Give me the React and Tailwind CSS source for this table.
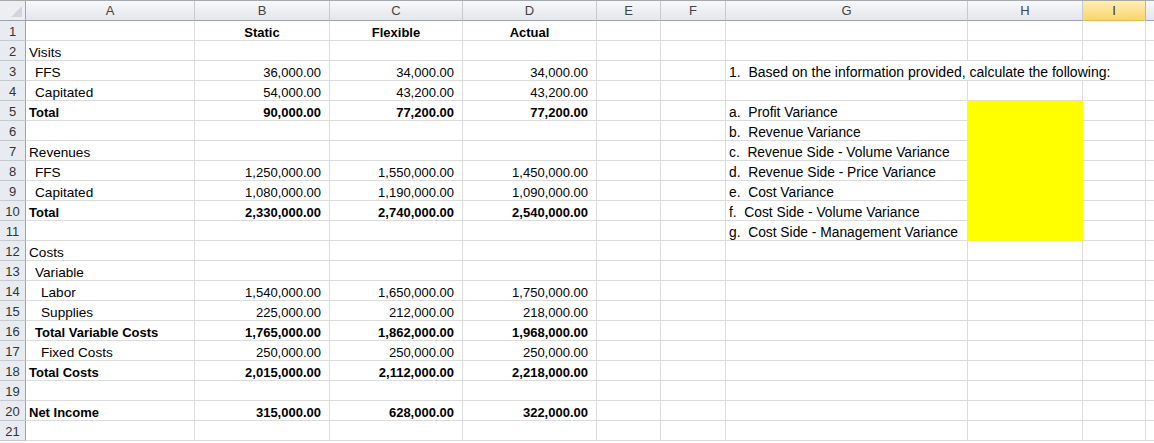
import React from "react";

const letters = ["A", "B", "C", "D", "E", "F", "G", "H", "I"];

const rows = [
  { hdr: true },
  { a: "Visits" },
  { a: "FFS", ind: 1, v: ["36,000.00", "34,000.00", "34,000.00"], g: "1.  Based on the information provided, calculate the following:", span: true },
  { a: "Capitated", ind: 1, v: ["54,000.00", "43,200.00", "43,200.00"] },
  { a: "Total", bold: true, v: ["90,000.00", "77,200.00", "77,200.00"], g: "a.  Profit Variance", y: true },
  { g: "b.  Revenue Variance", y: true },
  { a: "Revenues", g: "c.  Revenue Side - Volume Variance", y: true },
  { a: "FFS", ind: 1, v: ["1,250,000.00", "1,550,000.00", "1,450,000.00"], g: "d.  Revenue Side - Price Variance", y: true },
  { a: "Capitated", ind: 1, v: ["1,080,000.00", "1,190,000.00", "1,090,000.00"], g: "e.  Cost Variance", y: true },
  { a: "Total", bold: true, v: ["2,330,000.00", "2,740,000.00", "2,540,000.00"], g: "f.  Cost Side - Volume Variance", y: true },
  { g: "g.  Cost Side - Management Variance", y: true },
  { a: "Costs" },
  { a: "Variable", ind: 1 },
  { a: "Labor", ind: 2, v: ["1,540,000.00", "1,650,000.00", "1,750,000.00"] },
  { a: "Supplies", ind: 2, v: ["225,000.00", "212,000.00", "218,000.00"] },
  { a: "Total Variable Costs", ind: 1, bold: true, v: ["1,765,000.00", "1,862,000.00", "1,968,000.00"] },
  { a: "Fixed Costs", ind: 2, v: ["250,000.00", "250,000.00", "250,000.00"] },
  { a: "Total Costs", bold: true, v: ["2,015,000.00", "2,112,000.00", "2,218,000.00"] },
  {},
  { a: "Net Income", bold: true, v: ["315,000.00", "628,000.00", "322,000.00"] },
  {},
];

const cell = "h-[20px] border-r border-b border-[#dadcdd] pt-[2px] leading-[19px] whitespace-nowrap";

const Row = ({ r, n }) => {
  const pad = r.ind === 2 ? "pl-[15px]" : r.ind === 1 ? "pl-[9px]" : "pl-[3px]";
  const weight = r.bold ? "font-bold text-[13px]" : "text-[13.6px]";
  return (
    <>
      <div className="h-[20px] border-r border-b border-r-[#9aa3ae] border-b-[#c6cbd2] bg-[#e8ebf0] text-center text-[#333] pt-[2px] leading-[18px]">
        {n}
      </div>
      <div className={`${cell} ${pad} ${weight}`}>{r.a}</div>
      {[0, 1, 2].map((i) =>
        r.hdr ? (
          <div key={i} className={`${cell} text-center font-bold`}>
            {["Static", "Flexible", "Actual"][i]}
          </div>
        ) : (
          <div key={i} className={`${cell} text-right pr-[8px] ${r.bold ? "font-bold" : ""}`}>
            {r.v ? r.v[i] : ""}
          </div>
        )
      )}
      <div className={cell}></div>
      <div className={cell}></div>
      {r.span ? (
        <div className={`${cell} col-span-3 pl-[3px] text-[14px] whitespace-pre`}>{r.g}</div>
      ) : (
        <>
          <div className={`${cell} pl-[3px] text-[13.8px] whitespace-pre ${r.y ? "border-r-[#ffff00]" : ""}`}>{r.g}</div>
          <div className={r.y ? "h-[20px] bg-[#ffff00]" : cell}></div>
          <div className={cell}></div>
        </>
      )}
      <div className="h-[20px] border-b border-[#dadcdd]"></div>
    </>
  );
};

export default function App() {
  return (
    <div className="w-[1154px] h-[443px] bg-white overflow-hidden text-[13px] text-black font-['Liberation_Sans',Arial,sans-serif]">
      <div className="grid grid-cols-[26px_169px_135px_133px_134px_64px_65px_242px_115px_63px_1fr] border-t border-[#a4a9b0]">
        <div className="relative h-[20px] border-r border-b border-r-[#9aa3ae] border-b-[#9aa3ae] bg-[#eceef2]">
          <svg className="absolute right-[3px] bottom-[3px]" width="11" height="11" viewBox="0 0 11 11">
            <polygon points="11,0 11,11 0,11" fill="#d2d6dc" />
          </svg>
        </div>
        {letters.map((l) =>
          l === "I" ? (
            <div
              key={l}
              className="h-[20px] border-r border-b border-r-[#e3b64a] border-b-[#f0b93f] bg-gradient-to-b from-[#fdeeb6] to-[#f9d56c] text-center text-[#333] leading-[20px]"
            >
              {l}
            </div>
          ) : (
            <div
              key={l}
              className="h-[20px] border-r border-b border-r-[#c5cad1] border-b-[#9aa3ae] bg-gradient-to-b from-[#f7f8fa] to-[#e3e6eb] text-center text-[#444] leading-[20px]"
            >
              {l}
            </div>
          )
        )}
        <div className="h-[20px] border-b border-[#9aa3ae] bg-gradient-to-b from-[#f7f8fa] to-[#e3e6eb]"></div>
        {rows.map((r, i) => (
          <Row key={i} r={r} n={i + 1} />
        ))}
      </div>
    </div>
  );
}
